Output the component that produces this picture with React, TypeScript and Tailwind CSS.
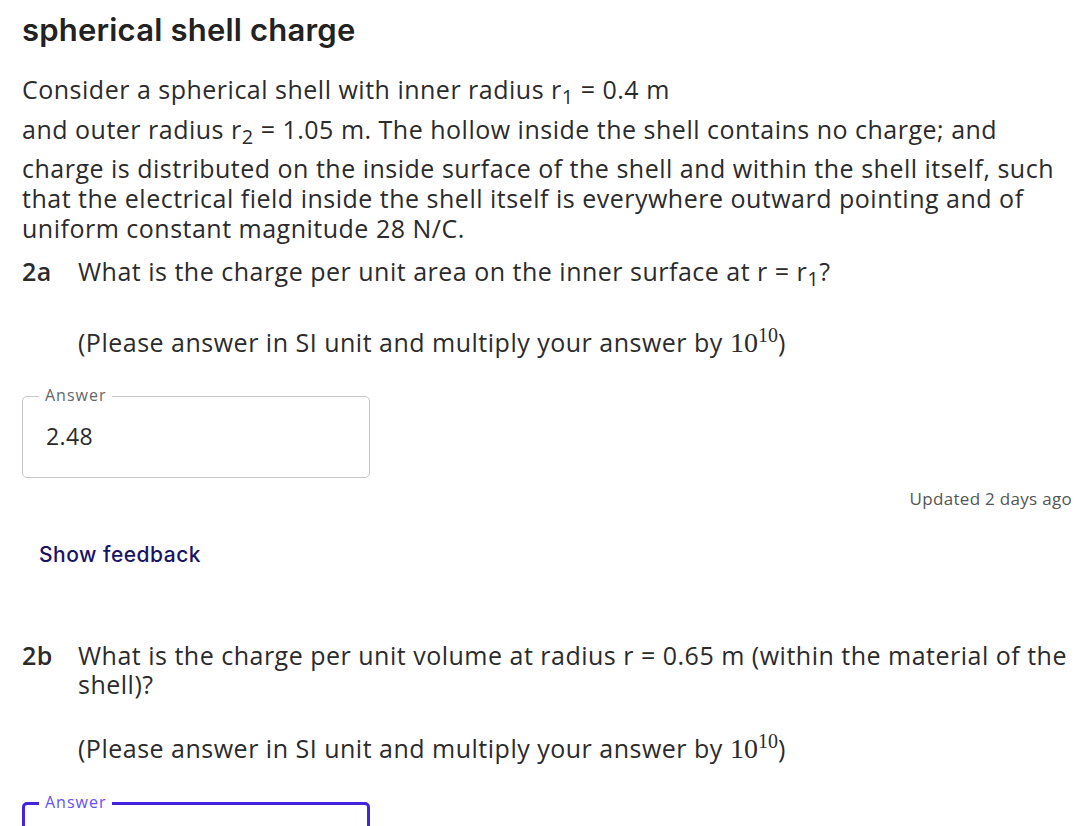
import React from 'react'

const body = { fontFamily: '"Open Sans", "Noto Sans", sans-serif' }
const math = { fontFamily: '"Liberation Serif", "DejaVu Serif", serif' }
const heading = { fontFamily: 'Inter, "Noto Sans", sans-serif' }

function Sub({ children }: { children: React.ReactNode }) {
  return <sub className="text-[0.8em]">{children}</sub>
}

function TenTen() {
  return (
    <span style={math} className="text-[28px] leading-none tracking-normal">
      10<sup className="text-[20px]">10</sup>
    </span>
  )
}

function AnswerField({ value, active }: { value?: string; active?: boolean }) {
  return (
    <div
      className={
        active
          ? 'relative w-[348px] h-[82px] rounded-[5px] border-[3px] border-[#4423dd] px-[21px]'
          : 'relative w-[348px] h-[82px] rounded-[5px] border border-[#c7c7c7] px-[23px]'
      }
    >
      <span
        className={
          active
            ? 'absolute -top-[13px] left-[14px] bg-white px-[6px] text-[16px] tracking-[1px] leading-[20px] text-[#6650f5]'
            : 'absolute -top-[12px] left-[16px] bg-white px-[6px] text-[16px] tracking-[1px] leading-[20px] text-[#666]'
        }
      >
        Answer
      </span>
      {value && <div className="pt-[24px] text-[23px] tracking-[0.4px] leading-[30px] text-[#2b2b2b]">{value}</div>}
    </div>
  )
}

export default function App() {
  return (
    <div
      style={body}
      className="w-[1080px] h-[826px] overflow-hidden bg-white text-[#2b2b2b] pl-[22px] pr-[8px] tracking-[0.5px]"
    >
      <h1 style={heading} className="pt-[12px] text-[31px] font-semibold tracking-[0.2px] leading-[36px] text-[#222]">
        spherical shell charge
      </h1>

      <div className="mt-[21px] text-[25px]">
        <div className="leading-[40px] whitespace-nowrap">
          Consider a spherical shell with inner radius r<Sub>1</Sub> = 0.4 m
        </div>
        <div className="leading-[40px] whitespace-nowrap">
          and outer radius r<Sub>2</Sub> = 1.05 m. The hollow inside the shell contains no charge; and
        </div>
        <div className="leading-[30px] mt-[4px] whitespace-nowrap">
          charge is distributed on the inside surface of the shell and within the shell itself, such
          <br />
          that the electrical field inside the shell itself is everywhere outward pointing and of
          <br />
          uniform constant magnitude 28 N/C.
        </div>
      </div>

      <div className="mt-[13px] flex text-[25px] leading-[30px] whitespace-nowrap">
        <div className="w-[56px] shrink-0 font-semibold">2a</div>
        <div>
          What is the charge per unit area on the inner surface at r = r<Sub>1</Sub>?
        </div>
      </div>
      <div className="mt-[41px] ml-[56px] text-[25px] leading-[30px] whitespace-nowrap">
        (Please answer in SI unit and multiply your answer by <TenTen />)
      </div>

      <div className="mt-[39px]">
        <AnswerField value="2.48" />
      </div>

      <div className="mt-[9px] text-right text-[17px] tracking-[0.3px] text-[#555] leading-[24px]">
        Updated 2 days ago
      </div>

      <button
        style={heading}
        className="mt-[28px] ml-[17px] text-[21px] font-medium tracking-[0.5px] leading-[32px] text-[#1b1464]"
      >
        Show feedback
      </button>

      <div className="mt-[70px] flex text-[25px] leading-[29px] whitespace-nowrap">
        <div className="w-[56px] shrink-0 font-semibold">2b</div>
        <div>
          What is the charge per unit volume at radius r = 0.65 m (within the material of the
          <br />
          shell)?
        </div>
      </div>
      <div className="mt-[34px] ml-[56px] text-[25px] leading-[30px] whitespace-nowrap">
        (Please answer in SI unit and multiply your answer by <TenTen />)
      </div>

      <div className="mt-[39px]">
        <AnswerField active />
      </div>
    </div>
  )
}
